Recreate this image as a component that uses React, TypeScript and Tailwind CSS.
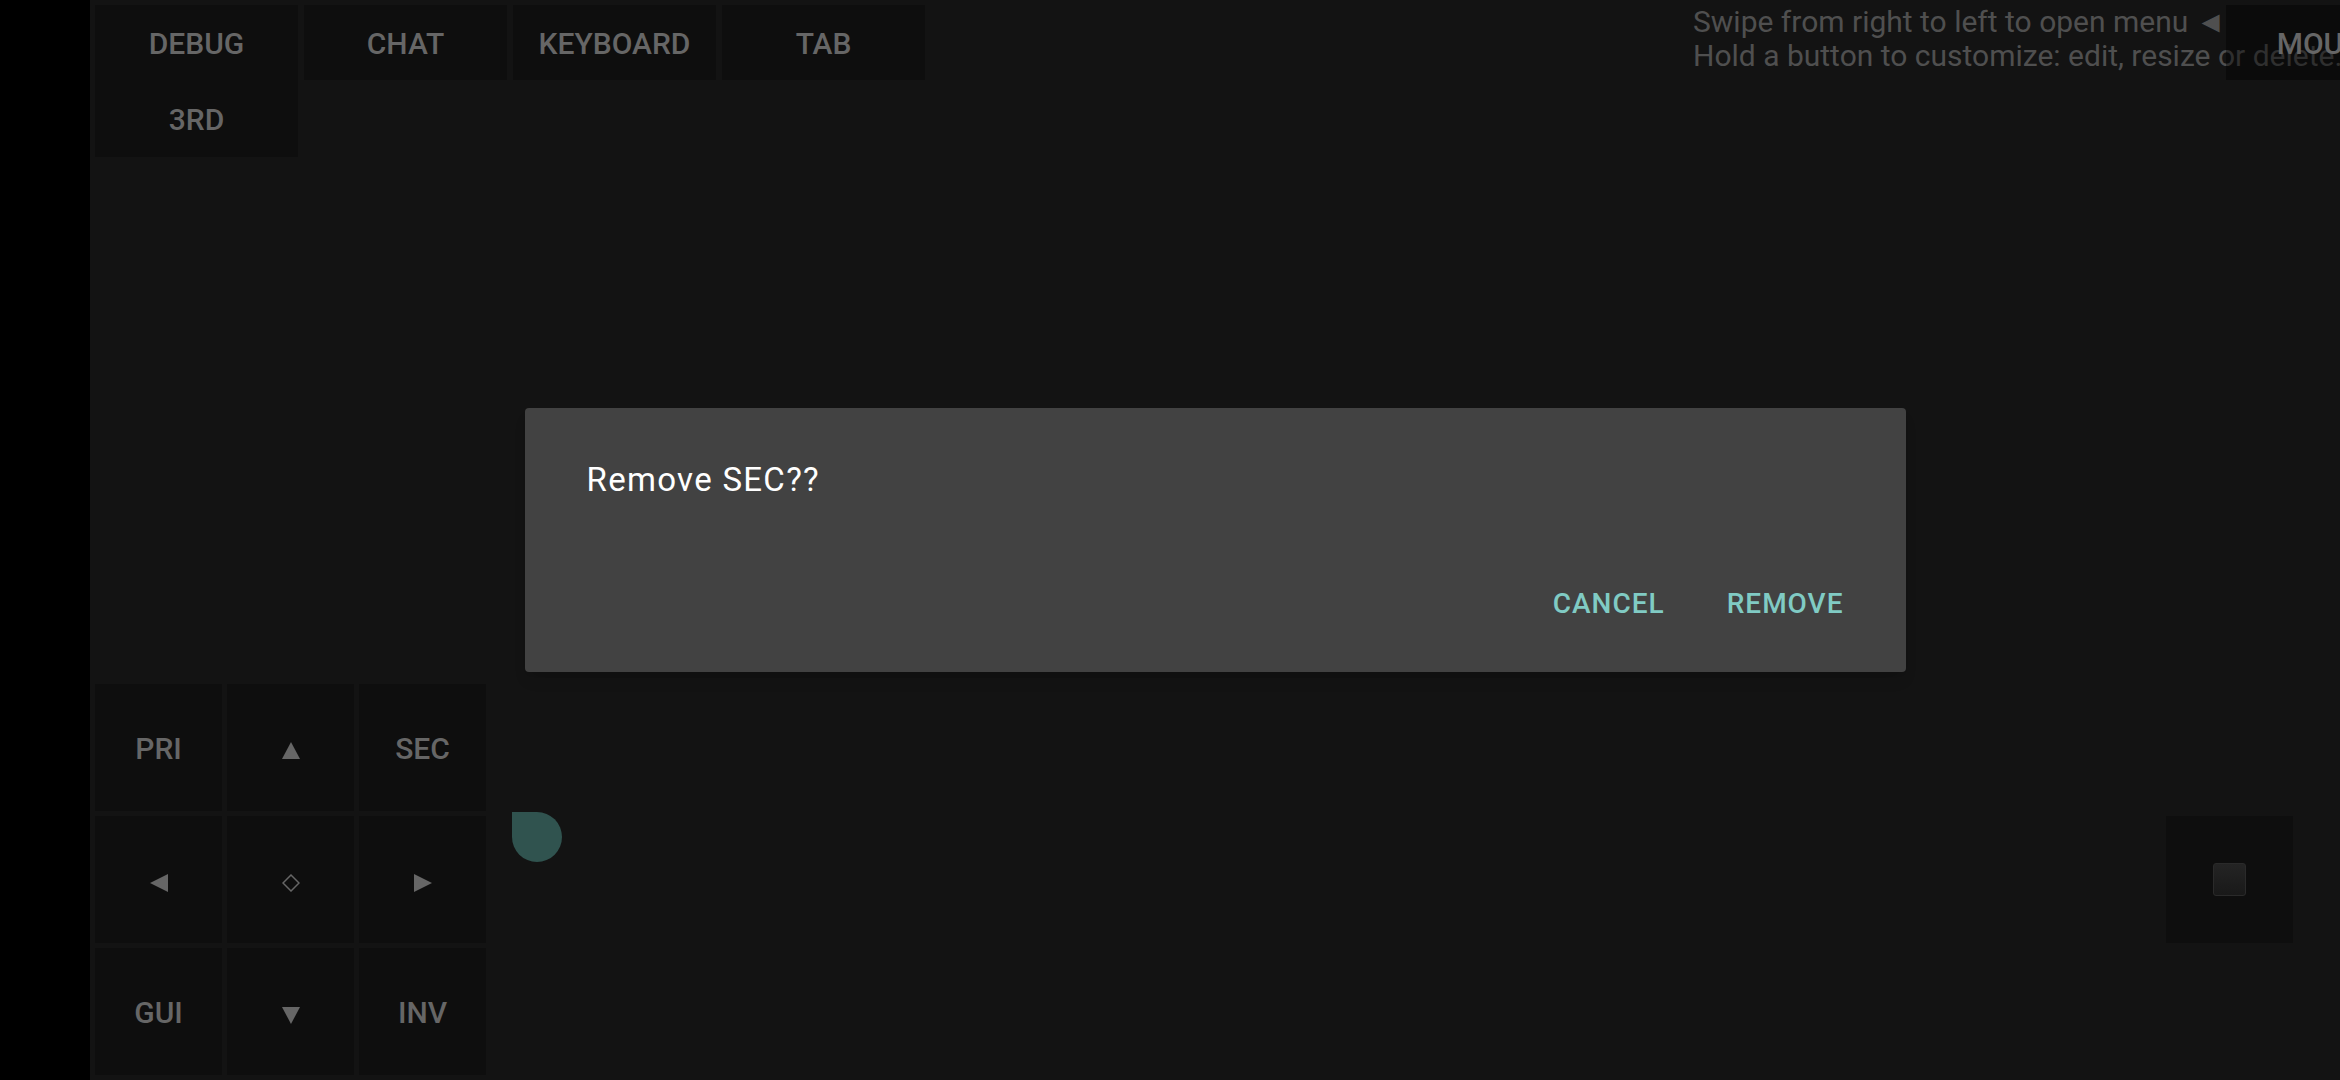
import type { ReactNode } from "react";

const font = "font-['Roboto','Liberation_Sans',sans-serif]";

const TopButton = ({ label }: { label: string }) => (
  <div className="flex items-center justify-center bg-[#0e0e0e] pt-[2px] text-[30px] font-medium text-[#666666]">
    {label}
  </div>
);

const Triangle = ({ dir }: { dir: "up" | "down" | "left" | "right" }) => {
  const points = {
    up: "9,0 18,17 0,17",
    down: "0,1 18,1 9,18",
    left: "18,0 18,18 0,9",
    right: "0,0 18,9 0,18",
  }[dir];
  return (
    <svg width="18" height="18" viewBox="0 0 18 18" className="mt-[4px]">
      <polygon points={points} fill="#666666" />
    </svg>
  );
};

const Diamond = () => (
  <svg width="18" height="18" viewBox="0 0 18 18" className="mt-[4px]">
    <polygon points="9,1 17,9 9,17 1,9" fill="none" stroke="#666666" strokeWidth="1.5" />
  </svg>
);

const PadCell = ({ children }: { children: ReactNode }) => (
  <div className="flex h-[127px] w-[127px] items-center justify-center bg-[#0e0e0e] pt-[2px] text-[30px] font-medium text-[#666666]">
    {children}
  </div>
);

export default function App() {
  return (
    <div className={`flex h-[1080px] w-[2340px] overflow-hidden bg-black ${font}`}>
      <div className="w-[90px] shrink-0 bg-black" />

      <main className="relative flex min-w-0 flex-1 flex-col bg-[#131313]">
        {/* top controls + hint */}
        <div className="flex pl-[5px] pt-[5px]">
          <div className="grid shrink-0 grid-cols-[203px_203px_203px_203px] grid-rows-[75px_77px] gap-x-[6px]">
            <TopButton label="DEBUG" />
            <TopButton label="CHAT" />
            <TopButton label="KEYBOARD" />
            <TopButton label="TAB" />
            <TopButton label="3RD" />
          </div>

          <div className="relative ml-[768px] shrink-0 whitespace-nowrap text-[30px] leading-[34px] text-[#4f4f4f]">
            <p>Swipe from right to left to open menu ◄</p>
            <p>Hold a button to customize: edit, resize or delete.</p>
            <div className="absolute left-[533px] top-0 flex h-[75px] w-[203px] items-center justify-center bg-black/40 pt-[2px] text-[30px] font-medium text-[#666666]">
              MOUSE
            </div>
          </div>
        </div>

        <div className="flex-1" />

        {/* bottom controls */}
        <div className="flex items-start pb-[5px] pl-[5px] pr-[47px]">
          <div className="grid grid-cols-[127px_127px_127px] gap-[5px]">
            <PadCell>PRI</PadCell>
            <PadCell>
              <Triangle dir="up" />
            </PadCell>
            <PadCell>SEC</PadCell>
            <PadCell>
              <Triangle dir="left" />
            </PadCell>
            <PadCell>
              <Diamond />
            </PadCell>
            <PadCell>
              <Triangle dir="right" />
            </PadCell>
            <PadCell>GUI</PadCell>
            <PadCell>
              <Triangle dir="down" />
            </PadCell>
            <PadCell>INV</PadCell>
          </div>

          <div className="ml-[26px] mt-[128px] h-[50px] w-[50px] rounded-full rounded-tl-none bg-[#30534f]" />

          <div className="flex-1" />

          <div className="mt-[132px] flex h-[127px] w-[127px] items-center justify-center bg-[#0e0e0e]">
            <div className="h-[33px] w-[33px] rounded-[3px] border border-[#2a2a2a] bg-gradient-to-b from-[#242424] to-[#191919]" />
          </div>
        </div>

        {/* dialog */}
        <div className="absolute inset-0 flex items-center justify-center">
          <div className="flex h-[264px] w-[1381px] flex-col justify-between rounded-[4px] bg-[#424242] px-[62px] pb-[52px] pt-[52px] shadow-lg">
            <p className="text-[33px] leading-[40px] tracking-[1.3px] text-white">Remove SEC??</p>
            <div className="flex justify-end gap-[62px] text-[28px] font-medium leading-[32px] tracking-[1px] text-[#80cbc4]">
              <span>CANCEL</span>
              <span>REMOVE</span>
            </div>
          </div>
        </div>
      </main>
    </div>
  );
}
